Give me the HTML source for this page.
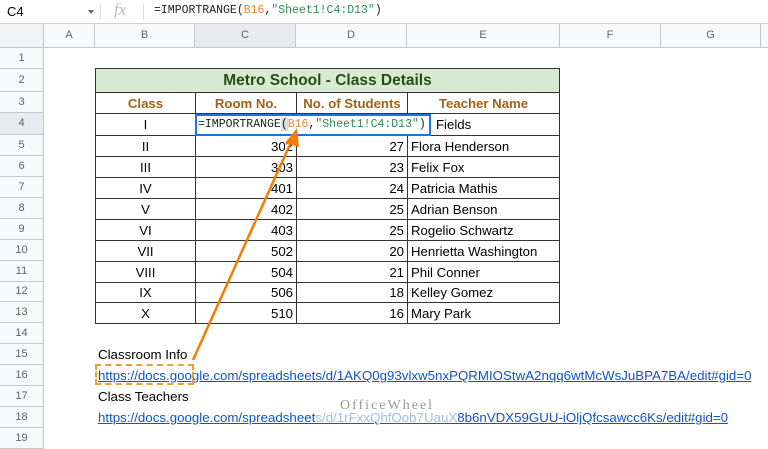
<!DOCTYPE html><html><head><style>
*{margin:0;padding:0;box-sizing:border-box}
body{width:768px;height:447px;overflow:hidden;background:#fff;font-family:"Liberation Sans",Arial,sans-serif;position:relative}
.a{position:absolute}
.hd{background:#f8f9fa;color:#5f6368;font-size:11px;text-align:center;border-right:1px solid #c7c7c7;border-bottom:1px solid #c7c7c7}
.t{font-size:13px;color:#000;white-space:nowrap;line-height:21px}
.mono{font-family:"Liberation Mono",monospace}
table td{border:1px solid #333;overflow:hidden;white-space:nowrap}
</style></head><body>
<div class="a" style="left:0;top:0;width:768px;height:24px;border-bottom:1px solid #d0d0d0;background:#fff"></div>
<div class="a t" style="left:7px;top:1px;font-size:13px">C4</div>
<div class="a" style="left:88px;top:10px;border:3px solid transparent;border-top:4px solid #666"></div>
<div class="a" style="left:100px;top:4px;width:1px;height:16px;background:#ddd"></div>
<div class="a" style="left:114px;top:0;font-family:'Liberation Serif',serif;font-style:italic;color:#bbb;font-size:17px">fx</div>
<div class="a" style="left:143px;top:4px;width:1px;height:16px;background:#ddd"></div>
<div class="a mono" style="left:154px;top:4px;font-size:11.5px;color:#222;white-space:nowrap">=IMPORTRANGE(<span style="color:#e8883a">B16</span>,<span style="color:#2e8b57">"Sheet1!C4:D13"</span>)</div>
<div class="a hd" style="left:0;top:24px;width:44px;height:24px;background:#f1f3f4"></div>
<div class="a hd" style="left:44px;top:24px;width:51px;height:24px;line-height:23px">A</div>
<div class="a hd" style="left:95px;top:24px;width:100px;height:24px;line-height:23px">B</div>
<div class="a hd" style="left:195px;top:24px;width:101px;height:24px;line-height:23px;background:#e8eaed">C</div>
<div class="a hd" style="left:296px;top:24px;width:111px;height:24px;line-height:23px">D</div>
<div class="a hd" style="left:407px;top:24px;width:153px;height:24px;line-height:23px">E</div>
<div class="a hd" style="left:560px;top:24px;width:101px;height:24px;line-height:23px">F</div>
<div class="a hd" style="left:661px;top:24px;width:100px;height:24px;line-height:23px">G</div>
<div class="a hd" style="left:761px;top:24px;width:10px;height:24px"></div>
<div class="a hd" style="left:0;top:48px;width:44px;height:21px;line-height:20px">1</div>
<div class="a hd" style="left:0;top:69px;width:44px;height:23px;line-height:22px">2</div>
<div class="a hd" style="left:0;top:92px;width:44px;height:21px;line-height:20px">3</div>
<div class="a hd" style="left:0;top:113px;width:44px;height:22px;line-height:21px;background:#e8eaed">4</div>
<div class="a hd" style="left:0;top:135px;width:44px;height:21px;line-height:20px">5</div>
<div class="a hd" style="left:0;top:156px;width:44px;height:21px;line-height:20px">6</div>
<div class="a hd" style="left:0;top:177px;width:44px;height:21px;line-height:20px">7</div>
<div class="a hd" style="left:0;top:198px;width:44px;height:21px;line-height:20px">8</div>
<div class="a hd" style="left:0;top:219px;width:44px;height:21px;line-height:20px">9</div>
<div class="a hd" style="left:0;top:240px;width:44px;height:21px;line-height:20px">10</div>
<div class="a hd" style="left:0;top:261px;width:44px;height:21px;line-height:20px">11</div>
<div class="a hd" style="left:0;top:282px;width:44px;height:20px;line-height:19px">12</div>
<div class="a hd" style="left:0;top:302px;width:44px;height:21px;line-height:20px">13</div>
<div class="a hd" style="left:0;top:323px;width:44px;height:21px;line-height:20px">14</div>
<div class="a hd" style="left:0;top:344px;width:44px;height:21px;line-height:20px">15</div>
<div class="a hd" style="left:0;top:365px;width:44px;height:21px;line-height:20px">16</div>
<div class="a hd" style="left:0;top:386px;width:44px;height:21px;line-height:20px">17</div>
<div class="a hd" style="left:0;top:407px;width:44px;height:21px;line-height:20px">18</div>
<div class="a hd" style="left:0;top:428px;width:44px;height:21px;line-height:20px">19</div>
<div class="a" style="left:95px;top:68px;width:465px;height:25px;background:#d9ead3;border:1px solid #333;text-align:center;font-weight:bold;font-size:15.5px;color:#274e13;line-height:23px">Metro School - Class Details</div>
<table class="a" style="left:95px;top:92px;border-collapse:collapse;font-size:13.2px;table-layout:fixed;width:464px">
<colgroup><col style="width:100px"><col style="width:101px"><col style="width:111px"><col style="width:152px"></colgroup>
<tr style="height:21px;font-weight:bold;color:#a0611a;text-align:center"><td>Class</td><td>Room No.</td><td>No. of Students</td><td>Teacher Name</td></tr>
<tr style="height:22px"><td style="text-align:center">I</td><td></td><td></td><td style="padding-left:28px">Fields</td></tr>
<tr style="height:21px"><td style="text-align:center">II</td><td style="text-align:right;padding-right:3px">302</td><td style="text-align:right;padding-right:3px">27</td><td style="padding-left:3px">Flora Henderson</td></tr>
<tr style="height:21px"><td style="text-align:center">III</td><td style="text-align:right;padding-right:3px">303</td><td style="text-align:right;padding-right:3px">23</td><td style="padding-left:3px">Felix Fox</td></tr>
<tr style="height:21px"><td style="text-align:center">IV</td><td style="text-align:right;padding-right:3px">401</td><td style="text-align:right;padding-right:3px">24</td><td style="padding-left:3px">Patricia Mathis</td></tr>
<tr style="height:21px"><td style="text-align:center">V</td><td style="text-align:right;padding-right:3px">402</td><td style="text-align:right;padding-right:3px">25</td><td style="padding-left:3px">Adrian Benson</td></tr>
<tr style="height:21px"><td style="text-align:center">VI</td><td style="text-align:right;padding-right:3px">403</td><td style="text-align:right;padding-right:3px">25</td><td style="padding-left:3px">Rogelio Schwartz</td></tr>
<tr style="height:21px"><td style="text-align:center">VII</td><td style="text-align:right;padding-right:3px">502</td><td style="text-align:right;padding-right:3px">20</td><td style="padding-left:3px">Henrietta Washington</td></tr>
<tr style="height:21px"><td style="text-align:center">VIII</td><td style="text-align:right;padding-right:3px">504</td><td style="text-align:right;padding-right:3px">21</td><td style="padding-left:3px">Phil Conner</td></tr>
<tr style="height:20px"><td style="text-align:center">IX</td><td style="text-align:right;padding-right:3px">506</td><td style="text-align:right;padding-right:3px">18</td><td style="padding-left:3px">Kelley Gomez</td></tr>
<tr style="height:21px"><td style="text-align:center">X</td><td style="text-align:right;padding-right:3px">510</td><td style="text-align:right;padding-right:3px">16</td><td style="padding-left:3px">Mary Park</td></tr>
</table>
<div class="a mono" style="left:195px;top:114px;width:236px;height:22px;background:#fff;border:2px solid #1a73e8;font-size:11.5px;line-height:18px;padding-left:1px;white-space:nowrap;color:#222;overflow:hidden">=IMPORTRANGE<span style="background:#ddd">(</span><span style="color:#e8883a">B16</span>,<span style="color:#2e8b57">"Sheet1!C4:D13"</span>)</div>
<div class="a t" style="left:98px;top:344px;font-size:13.3px">Classroom Info</div>
<div class="a t" style="left:98px;top:365px;color:#1155cc;text-decoration:underline;font-size:13.3px">https://docs.google.com/spreadsheets/d/1AKQ0g93vlxw5nxPQRMIOStwA2nqq6wtMcWsJuBPA7BA/edit#gid=0</div>
<div class="a t" style="left:98px;top:386px;font-size:13.3px">Class Teachers</div>
<div class="a t" style="left:98px;top:407px;color:#1155cc;text-decoration:underline;font-size:13.3px">https://docs.google.com/spreadsheets/d/1rFxxQhfOob7UauX8b6nVDX59GUU-iOljQfcsawcc6Ks/edit#gid=0</div>
<div class="a" style="left:316px;top:390px;width:140px;height:32px;background:rgba(255,255,255,0.6);color:#999;font-family:'Liberation Serif',serif;font-size:14px;letter-spacing:2px;padding:8px 0 0 24px">OfficeWheel</div>
<div class="a" style="left:95px;top:364px;width:99px;height:21px;border:2px dashed #f39c28"></div>
<svg class="a" style="left:0;top:0" width="768" height="447"><line x1="193" y1="360" x2="292" y2="140" stroke="#f57c00" stroke-width="2.5"/><polygon points="297,128 285,143 299,147" fill="#f57c00"/></svg>
</body></html>
